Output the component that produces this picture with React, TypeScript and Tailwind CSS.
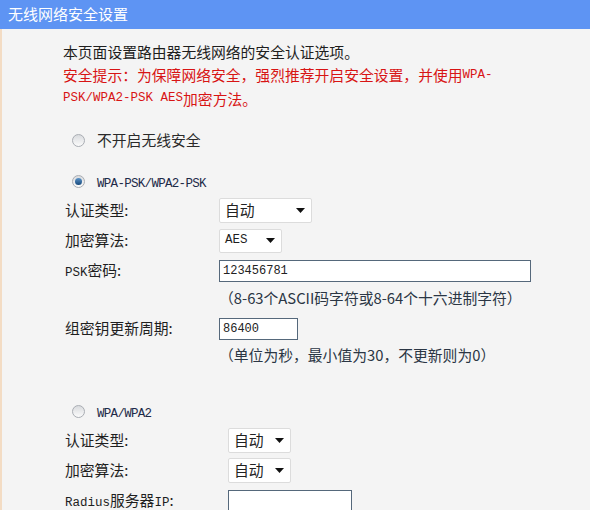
import React from 'react'

const cjk = '"Noto Sans CJK SC", "Liberation Sans", sans-serif'

function Mono({ children, tight = false }: { children: React.ReactNode; tight?: boolean }) {
  return (
    <span className={`font-['Liberation_Mono',monospace] text-[12.5px] ${tight ? 'tracking-[-0.7px]' : ''}`}>{children}</span>
  )
}

function Radio({ checked = false }: { checked?: boolean }) {
  return (
    <div className="ml-[9px] flex h-[13px] w-[13px] items-center justify-center rounded-full border border-[#a9adb3] bg-gradient-to-b from-[#d9dbde] to-[#fbfbfb]">
      {checked && <div className="h-[7px] w-[7px] rounded-full bg-gradient-to-b from-[#5b93c8] to-[#174a7c]" />}
    </div>
  )
}

function Select({ value, width, mono = false }: { value: string; width: string; mono?: boolean }) {
  return (
    <div className={`flex h-full items-center justify-between rounded-[2px] border border-[#dcdcdc] bg-white pl-[5px] pr-[6px] ${width}`}>
      {mono ? <Mono>{value}</Mono> : <span className="text-[#222]">{value}</span>}
      <svg width="9" height="5" viewBox="0 0 9 5">
        <path d="M0 0h9L4.5 5z" fill="#111" />
      </svg>
    </div>
  )
}

function Input({ value, width }: { value?: string; width: string }) {
  return (
    <div className={`flex h-full items-center border border-[#55687b] bg-white pl-[3px] ${width}`}>
      {value && <span className="font-['Liberation_Mono',monospace] text-[12px] text-[#222]">{value}</span>}
    </div>
  )
}

export default function App() {
  return (
    <div className="h-[510px] w-[590px] overflow-hidden bg-[#f4f4f4] text-[#1e1e1e]" style={{ fontFamily: cjk }}>
      <div className="flex h-[29px] items-center bg-[#5e94f3] pl-2 text-[15px] text-white">无线网络安全设置</div>

      <div className="h-[481px] border-l-2 border-[#f3dcc4] pl-[61px] pt-[11px] text-[14.8px]">
        <div className="flex h-[23.5px] items-center whitespace-nowrap">本页面设置路由器无线网络的安全认证选项。</div>
        <div className="flex h-[23.5px] items-center whitespace-nowrap text-[#d81414]">
          安全提示：为保障网络安全，强烈推荐开启安全设置，并使用<Mono>WPA-</Mono>
        </div>
        <div className="flex h-[23.5px] items-center whitespace-nowrap text-[#d81414]">
          <Mono>PSK/WPA2-PSK AES</Mono>加密方法。
        </div>

        <div className="mt-[18px] flex h-[24px] items-center gap-[12px]">
          <Radio />
          <span className="text-[#2a2a2a]">不开启无线安全</span>
        </div>

        <div className="mt-[17px] flex h-[24px] items-center gap-[12px]">
          <Radio checked />
          <span className="text-[#1d2a48]"><Mono tight>WPA-PSK/WPA2-PSK</Mono></span>
        </div>

        <div className="ml-[2px]">
          <div className="mt-[4px] flex h-[25px] items-center">
            <span className="w-[154px]">认证类型:</span>
            <Select value="自动" width="w-[93px]" />
          </div>
          <div className="mt-[6px] flex h-[24px] items-center">
            <span className="w-[154px]">加密算法:</span>
            <Select value="AES" width="w-[63px]" mono />
          </div>
          <div className="mt-[7px] flex h-[22px] items-center">
            <span className="w-[154px]"><Mono>PSK</Mono>密码:</span>
            <Input value="123456781" width="w-[312px]" />
          </div>
          <div className="mt-[6px] flex h-[22px] items-center whitespace-nowrap pl-[154px] text-[#2b3644]">
            （8-63个ASCII码字符或8-64个十六进制字符）
          </div>
          <div className="mt-[8px] flex h-[22px] items-center">
            <span className="w-[154px]">组密钥更新周期:</span>
            <Input value="86400" width="w-[79px]" />
          </div>
          <div className="mt-[5px] flex h-[22px] items-center whitespace-nowrap pl-[154px] text-[#2b3644]">
            （单位为秒，最小值为30，不更新则为0）
          </div>
        </div>

        <div className="mt-[33px] flex h-[24px] items-center gap-[12px]">
          <Radio />
          <span className="text-[#1d2a48]"><Mono tight>WPA/WPA2</Mono></span>
        </div>

        <div className="ml-[2px]">
          <div className="mt-[4px] flex h-[25px] items-center">
            <span className="w-[163px]">认证类型:</span>
            <Select value="自动" width="w-[63px]" />
          </div>
          <div className="mt-[5px] flex h-[25px] items-center">
            <span className="w-[163px]">加密算法:</span>
            <Select value="自动" width="w-[63px]" />
          </div>
          <div className="mt-[7px] flex h-[23px] items-center">
            <span className="w-[163px]"><Mono>Radius</Mono>服务器<Mono>IP</Mono>:</span>
            <Input width="w-[124px]" />
          </div>
        </div>
      </div>
    </div>
  )
}
